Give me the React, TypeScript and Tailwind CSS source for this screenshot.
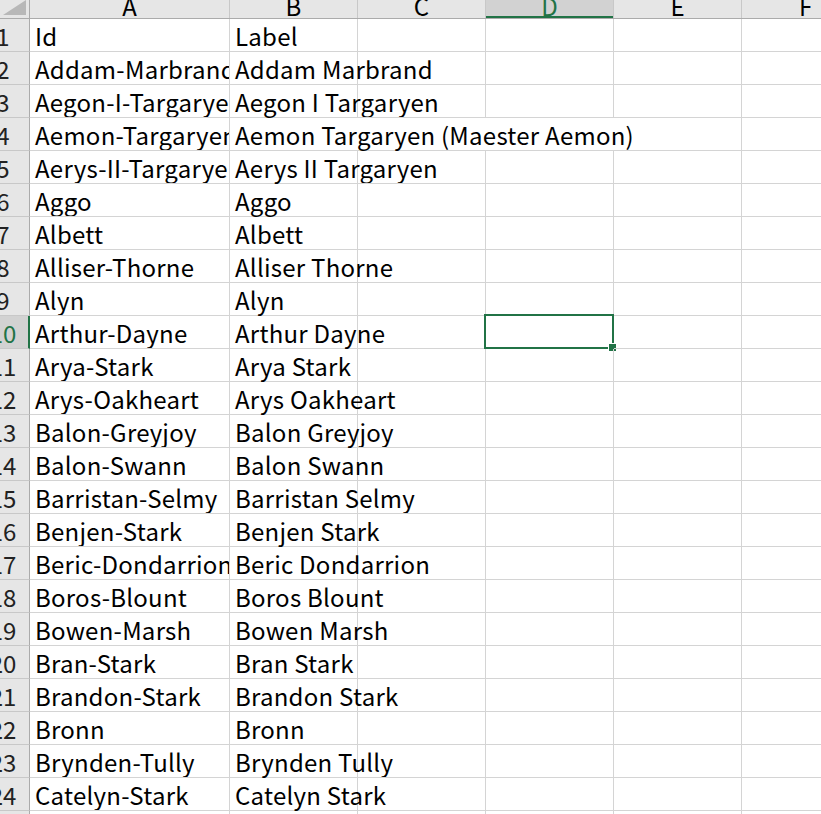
import React from 'react';

// Sheet data: column A holds the id, column B the label
const rows: [string, string][] = [
  ['Id', 'Label'],
  ['Addam-Marbrand', 'Addam Marbrand'],
  ['Aegon-I-Targaryen', 'Aegon I Targaryen'],
  ['Aemon-Targaryen', 'Aemon Targaryen (Maester Aemon)'],
  ['Aerys-II-Targaryen', 'Aerys II Targaryen'],
  ['Aggo', 'Aggo'],
  ['Albett', 'Albett'],
  ['Alliser-Thorne', 'Alliser Thorne'],
  ['Alyn', 'Alyn'],
  ['Arthur-Dayne', 'Arthur Dayne'],
  ['Arya-Stark', 'Arya Stark'],
  ['Arys-Oakheart', 'Arys Oakheart'],
  ['Balon-Greyjoy', 'Balon Greyjoy'],
  ['Balon-Swann', 'Balon Swann'],
  ['Barristan-Selmy', 'Barristan Selmy'],
  ['Benjen-Stark', 'Benjen Stark'],
  ['Beric-Dondarrion', 'Beric Dondarrion'],
  ['Boros-Blount', 'Boros Blount'],
  ['Bowen-Marsh', 'Bowen Marsh'],
  ['Bran-Stark', 'Bran Stark'],
  ['Brandon-Stark', 'Brandon Stark'],
  ['Bronn', 'Bronn'],
  ['Brynden-Tully', 'Brynden Tully'],
  ['Catelyn-Stark', 'Catelyn Stark'],
  ['', ''],
];

const SELECTED_ROW = 10;
const letters = ['C', 'D', 'E', 'F'];

const font = "font-['Noto_Sans_CJK_SC','Noto_Sans',sans-serif] text-[24px] leading-none";

function HeaderRow() {
  return (
    <div className={`flex h-[19px] shrink-0 bg-[#e6e6e6] border-b border-[#ababab] ${font}`}>
      {/* corner with select-all triangle */}
      <div className="w-[30px] shrink-0 border-r border-[#ababab]">
        <svg width="29" height="18" className="block">
          <polygon points="3,15 26,15 26,0" fill="#b8b8b8" />
        </svg>
      </div>
      <div className="w-[200px] shrink-0 border-r border-[#c8c8c8] flex justify-center items-end overflow-hidden">
        <span>A</span>
      </div>
      <div className="w-[128px] shrink-0 border-r border-[#c8c8c8] flex justify-center items-end overflow-hidden">
        <span>B</span>
      </div>
      {letters.map((l) => (
        <div
          key={l}
          className={
            l === 'D'
              ? 'w-[128px] shrink-0 border-r border-[#c8c8c8] flex justify-center items-end overflow-hidden bg-[#d2d2d2] text-[#217346] shadow-[inset_0_-2px_0_#217346]'
              : 'w-[128px] shrink-0 border-r border-[#c8c8c8] flex justify-center items-end overflow-hidden'
          }
        >
          <span>{l}</span>
        </div>
      ))}
    </div>
  );
}

function Row({ n, id, label }: { n: number; id: string; label: string }) {
  const selected = n === SELECTED_ROW;
  const wide = n === 4;
  return (
    <div className={`flex h-[33px] shrink-0 ${font}`}>
      {/* row number, clipped on the left like the scrolled sheet */}
      <div
        className={
          selected
            ? 'w-[30px] shrink-0 overflow-hidden bg-[#d2d2d2] border-r-2 border-[#217346] border-b border-b-[#c8c8c8] text-[#217346]'
            : 'w-[30px] shrink-0 overflow-hidden bg-[#e6e6e6] border-r border-[#ababab] border-b border-b-[#c8c8c8] text-[#222]'
        }
      >
        <div className="ml-[-24px] w-[54px] h-full flex justify-center items-end pb-[3px]">{n}</div>
      </div>
      <div className="w-[200px] shrink-0 border-r border-b border-[#d4d4d4] overflow-hidden whitespace-nowrap flex items-end pl-[5px] pb-[3px] tracking-[0.25px]">
        {id}
      </div>
      {wide ? (
        <div className="w-[512px] shrink-0 border-r border-b border-[#d4d4d4] whitespace-nowrap flex items-end pl-[5px] pb-[3px] tracking-[0.25px]">
          {label}
        </div>
      ) : (
        <div className="w-[128px] shrink-0 border-r border-b border-[#d4d4d4] overflow-visible whitespace-nowrap flex items-end pl-[5px] pb-[3px] tracking-[0.25px]">
          {label}
        </div>
      )}
      {(wide ? ['F'] : letters).map((l) => (
        <div key={l} className="w-[128px] shrink-0 border-r border-b border-[#d4d4d4] relative">
          {selected && l === 'D' && (
            <>
              <div className="absolute left-[-2px] top-[-2px] w-[130px] h-[35px] border-2 border-[#217346]" />
              <div className="absolute left-[122px] top-[27px] w-[9px] h-[9px] bg-[#217346] border border-white" />
            </>
          )}
        </div>
      ))}
    </div>
  );
}

export default function App() {
  return (
    <div className="w-[821px] h-[814px] overflow-hidden bg-white text-black flex flex-col">
      <HeaderRow />
      {rows.map(([id, label], i) => (
        <Row key={i} n={i + 1} id={id} label={label} />
      ))}
    </div>
  );
}
